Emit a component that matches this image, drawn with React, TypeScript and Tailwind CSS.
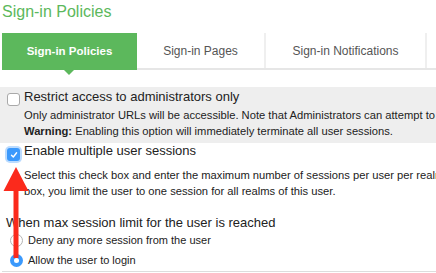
import React from "react";

const TABS = [
  { label: "Sign-in Policies", width: "w-[135px]", active: true },
  { label: "Sign-in Pages", width: "w-[129px]", active: false },
  { label: "Sign-in Notifications", width: "w-[161px]", active: false },
];

function Checkbox({ checked }: { checked?: boolean }) {
  if (checked) {
    return (
      <span className="ml-[7px] mt-[4px] flex h-[13px] w-[13px] shrink-0 items-center justify-center rounded-[3px] bg-[#3b99fc] shadow-[0_0_0_2px_rgba(59,153,252,0.35)]">
        <svg width="8" height="8" viewBox="0 0 8 8">
          <path d="M1.5 4.2 L3.3 6 L6.6 1.8" fill="none" stroke="#fff" strokeWidth="1.4" strokeLinecap="round" strokeLinejoin="round" />
        </svg>
      </span>
    );
  }
  return (
    <span className="ml-[7px] mt-[3px] h-[13px] w-[13px] shrink-0 rounded-[3px] border border-[#a9a9a9] bg-white" />
  );
}

function Radio({ checked }: { checked?: boolean }) {
  return checked ? (
    <span className="ml-[10px] mt-[1px] flex h-[13px] w-[13px] shrink-0 items-center justify-center rounded-full bg-[#3b99fc]">
      <span className="h-[5px] w-[5px] rounded-full bg-white" />
    </span>
  ) : (
    <span className="ml-[10px] mt-[1px] h-[13px] w-[13px] shrink-0 rounded-full border border-[#b3b3b3] bg-white" />
  );
}

export default function App() {
  return (
    <div className="relative h-[273px] w-[436px] overflow-hidden bg-white font-['Liberation_Sans',Arial,sans-serif] text-[#333]">
      {/* Page title */}
      <h1 className="pl-[2px] pt-[2px] text-[16px] leading-[20px] text-[#5cb85c]">Sign-in Policies</h1>

      {/* Tabs */}
      <div className="ml-[2px] mt-[11px] flex h-[37px] border-b-2 border-[#e6e6e6]">
        {TABS.map((t) =>
          t.active ? (
            <div
              key={t.label}
              className={`relative -mb-[2px] flex ${t.width} items-center justify-center bg-[#5cb85c] text-[11.5px] font-bold text-white`}
            >
              {t.label}
              <span className="absolute left-[62px] top-full h-0 w-0 border-x-[5px] border-t-[5px] border-x-transparent border-t-[#5cb85c]" />
            </div>
          ) : (
            <div
              key={t.label}
              className={`flex ${t.width} items-center justify-center border-r-2 border-[#efefef] text-[12px] text-[#555]`}
            >
              {t.label}
            </div>
          ),
        )}
      </div>

      {/* Restrict access */}
      <div className="mt-[17px] h-[56px] bg-[#eeeeee] pt-[3px]">
        <label className="flex items-start text-[13px] leading-[14px] text-[#222]">
          <Checkbox />
          <span className="ml-[4px]">Restrict access to administrators only</span>
        </label>
        <div className="mt-[1px] whitespace-nowrap pl-[24px] text-[11.2px] leading-[16px] text-[#222]">
          <p>Only administrator URLs will be accessible. Note that Administrators can attempt to</p>
          <p>
            <b>Warning:</b> Enabling this option will immediately terminate all user sessions.
          </p>
        </div>
      </div>

      {/* Multiple sessions */}
      <label className="mt-[1px] flex items-start text-[13px] leading-[14px] text-[#222]">
        <Checkbox checked />
        <span className="ml-[4px]">Enable multiple user sessions</span>
      </label>
      <div className="mt-[6px] w-[436px] overflow-hidden whitespace-nowrap pl-[24px] text-[11.2px] leading-[16px] text-[#222]">
        <p>Select this check box and enter the maximum number of sessions per user per realm. If you clear this</p>
        <p>box, you limit the user to one session for all realms of this user.</p>
      </div>

      <p className="mt-[17px] pl-[6px] text-[13px] leading-[14px] text-[#222]">When max session limit for the user is reached</p>
      <div className="mt-[3px] flex flex-col gap-[6px] text-[11px] leading-[14px] text-[#222]">
        <label className="flex items-start">
          <Radio />
          <span className="ml-[5px]">Deny any more session from the user</span>
        </label>
        <label className="flex items-start">
          <Radio checked />
          <span className="ml-[5px]">Allow the user to login</span>
        </label>
      </div>
      <div className="ml-[2px] mt-[4px] h-px bg-[#dddddd]" />

      {/* Annotation arrow */}
      <svg className="pointer-events-none absolute left-0 top-[160px]" width="40" height="110" viewBox="0 0 40 110">
        <path d="M16 7 L3.5 31 L13.5 31 L13.5 98 L18.5 98 L18.5 31 L28.5 31 Z" fill="#fb2a1c" />
      </svg>
    </div>
  );
}
